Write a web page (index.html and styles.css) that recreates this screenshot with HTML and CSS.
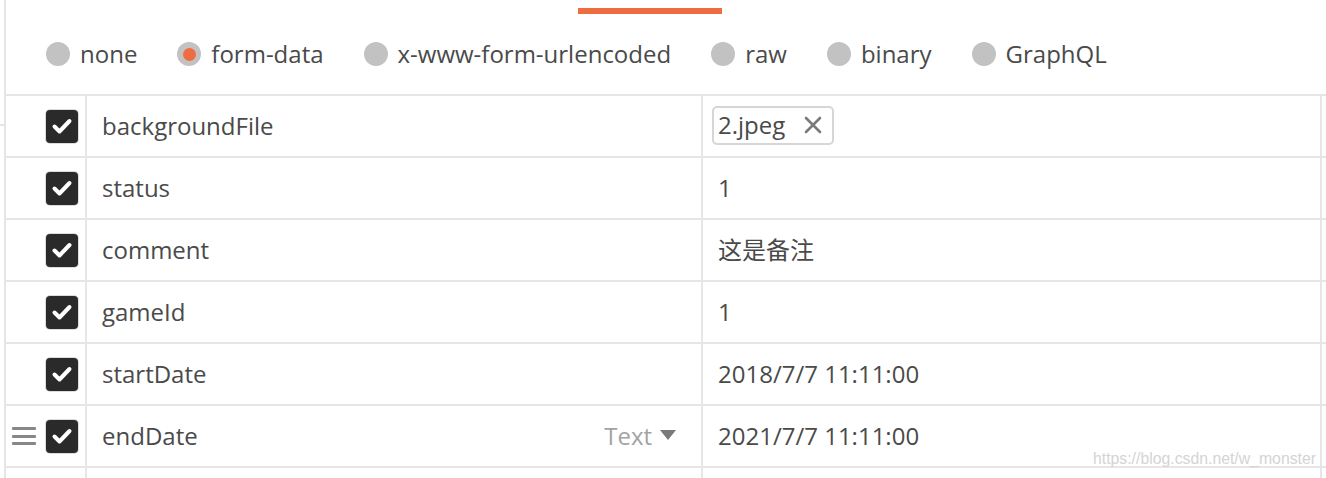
FILE: index.html
```html
<!DOCTYPE html>
<html>
<head>
<meta charset="utf-8">
<link rel="stylesheet" href="styles.css">
</head>
<body>
<div class="page">
  <div class="gutter"><div class="tick"></div></div>
  <div class="panel">
    <div class="tabline"><div class="tabbar"></div></div>
    <div class="radios">
      <label class="radio"><span class="dot"></span>none</label>
      <label class="radio"><span class="dot on"></span>form-data</label>
      <label class="radio"><span class="dot"></span>x-www-form-urlencoded</label>
      <label class="radio"><span class="dot"></span>raw</label>
      <label class="radio"><span class="dot"></span>binary</label>
      <label class="radio"><span class="dot"></span>GraphQL</label>
    </div>
    <div class="table">
      <div class="row">
        <div class="cell check"><span class="drag"></span><span class="box"><svg viewBox="0 0 32 32" width="32" height="32"><polyline points="8.5,16.5 13.5,21.5 23.5,11" fill="none" stroke="#fff" stroke-width="4" stroke-linecap="round" stroke-linejoin="round"/></svg></span></div>
        <div class="cell key">backgroundFile</div>
        <div class="cell value file"><span class="chip">2.jpeg<svg class="x" viewBox="0 0 18 18" width="18" height="18"><path d="M2 2L16 16M16 2L2 16" stroke="#7a7a7a" stroke-width="2.6" stroke-linecap="round"/></svg></span></div>
        <div class="cell rest"></div>
      </div>
      <div class="row">
        <div class="cell check"><span class="drag"></span><span class="box"><svg viewBox="0 0 32 32" width="32" height="32"><polyline points="8.5,16.5 13.5,21.5 23.5,11" fill="none" stroke="#fff" stroke-width="4" stroke-linecap="round" stroke-linejoin="round"/></svg></span></div>
        <div class="cell key">status</div>
        <div class="cell value">1</div>
        <div class="cell rest"></div>
      </div>
      <div class="row">
        <div class="cell check"><span class="drag"></span><span class="box"><svg viewBox="0 0 32 32" width="32" height="32"><polyline points="8.5,16.5 13.5,21.5 23.5,11" fill="none" stroke="#fff" stroke-width="4" stroke-linecap="round" stroke-linejoin="round"/></svg></span></div>
        <div class="cell key">comment</div>
        <div class="cell value">这是备注</div>
        <div class="cell rest"></div>
      </div>
      <div class="row">
        <div class="cell check"><span class="drag"></span><span class="box"><svg viewBox="0 0 32 32" width="32" height="32"><polyline points="8.5,16.5 13.5,21.5 23.5,11" fill="none" stroke="#fff" stroke-width="4" stroke-linecap="round" stroke-linejoin="round"/></svg></span></div>
        <div class="cell key">gameId</div>
        <div class="cell value">1</div>
        <div class="cell rest"></div>
      </div>
      <div class="row">
        <div class="cell check"><span class="drag"></span><span class="box"><svg viewBox="0 0 32 32" width="32" height="32"><polyline points="8.5,16.5 13.5,21.5 23.5,11" fill="none" stroke="#fff" stroke-width="4" stroke-linecap="round" stroke-linejoin="round"/></svg></span></div>
        <div class="cell key">startDate</div>
        <div class="cell value">2018/7/7 11:11:00</div>
        <div class="cell rest"></div>
      </div>
      <div class="row hover">
        <div class="cell check"><span class="drag show"><i></i><i></i><i></i></span><span class="box"><svg viewBox="0 0 32 32" width="32" height="32"><polyline points="8.5,16.5 13.5,21.5 23.5,11" fill="none" stroke="#fff" stroke-width="4" stroke-linecap="round" stroke-linejoin="round"/></svg></span></div>
        <div class="cell key">endDate<span class="type">Text<svg class="caret" viewBox="0 0 16 10" width="16" height="10"><path d="M0 0H16L8 10Z" fill="#7a7a7a"/></svg></span></div>
        <div class="cell value">2021/7/7 11:11:00</div>
        <div class="cell rest"></div>
      </div>
      <div class="row">
        <div class="cell check"></div>
        <div class="cell key"></div>
        <div class="cell value"></div>
        <div class="cell rest"></div>
      </div>
    </div>
  </div>
  <div class="watermark">https://blog.csdn.net/w_monster</div>
</div>
</body>
</html>
```
FILE: styles.css
```css
* { box-sizing: border-box; }
html, body { margin: 0; padding: 0; background: #fff; }
body {
  font-family: "Open Sans", "Noto Sans CJK SC", sans-serif;
  color: #4a4a4a;
  font-size: 24px;
  overflow: hidden;
}
.page {
  position: relative;
  display: flex;
  width: 1326px;
  height: 478px;
  overflow: hidden;
}
.gutter { width: 4px; flex: none; }
.tick { margin-top: 124px; height: 2px; background: #e6e6e6; }
.panel {
  flex: 1;
  border-left: 2px solid #e6e6e6;
  min-width: 0;
}
.tabline { padding-top: 8px; height: 14px; }
.tabbar { margin-left: 572px; width: 144px; height: 6px; background: #ef6b40; }
.radios {
  height: 80px;
  display: flex;
  align-items: center;
  padding-left: 40px;
  gap: 40px;
}
.radio { display: flex; align-items: center; gap: 10px; line-height: 1; }
.dot {
  width: 24px; height: 24px; border-radius: 50%;
  background: #c2c2c2;
  display: flex; align-items: center; justify-content: center;
  flex: none;
}
.dot.on::after {
  content: "";
  width: 13px; height: 13px; border-radius: 50%;
  background: #ef6b40;
}
.table { border-top: 2px solid #e6e6e6; }
.row {
  display: grid;
  grid-template-columns: 81px 616px 619px 1fr;
  height: 62px;
  border-bottom: 2px solid #e6e6e6;
}
.cell {
  border-right: 2px solid #e6e6e6;
  display: flex;
  align-items: center;
  white-space: nowrap;
  line-height: 1;
}
.cell.rest { border-right: none; }
.check { padding-left: 6px; gap: 10px; }
.drag { width: 24px; height: 18px; display: flex; flex-direction: column; justify-content: space-between; }
.drag i { display: block; height: 3px; background: #878787; border-radius: 1px; }
.box {
  width: 32px; height: 33px;
  background: #2a2a2a;
  border-radius: 4px;
  box-shadow: 0 0 0 1px #dcdcdc;
  display: flex; align-items: center; justify-content: center;
}
.box svg { display: block; }
.key { padding-left: 15px; padding-right: 25px; }
.type { margin-left: auto; color: #a3a3a3; display: flex; align-items: center; gap: 8px; }
.caret { display: block; margin-top: -3px; }
.value { padding-left: 15px; }
.value.file { padding-left: 9px; }
.chip {
  display: flex; align-items: center;
  height: 39px;
  margin-top: -2px;
  border: 2px solid #d6d6d6;
  border-radius: 5px;
  padding: 0 10px 0 4px;
  gap: 19px;
}
.x { display: block; }
.watermark {
  position: absolute;
  right: 10px;
  bottom: 11px;
  font-family: "Liberation Sans", Arial, sans-serif;
  font-size: 15.8px;
  color: #d4d4d4;
  line-height: 1;
}
```
